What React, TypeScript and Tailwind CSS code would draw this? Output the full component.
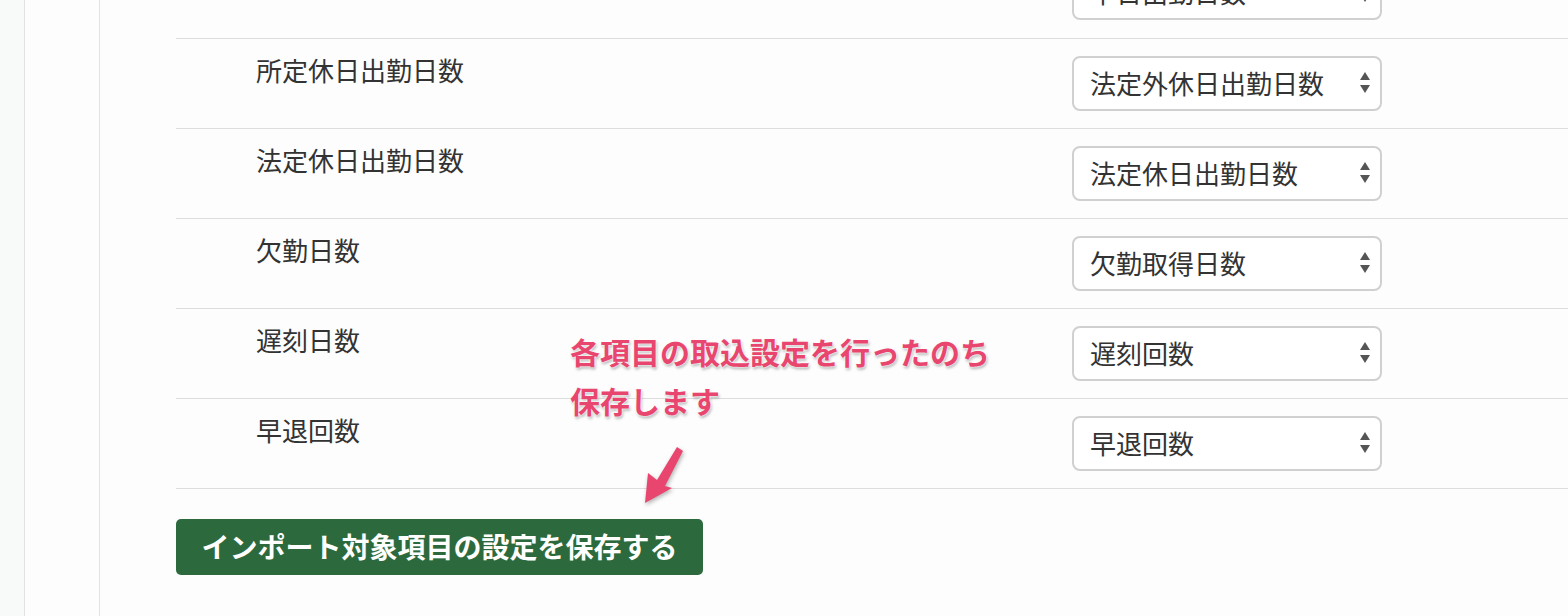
import React from 'react';

const rows = [
  { label: '平日出勤日数', value: '平日出勤日数' },
  { label: '所定休日出勤日数', value: '法定外休日出勤日数' },
  { label: '法定休日出勤日数', value: '法定休日出勤日数' },
  { label: '欠勤日数', value: '欠勤取得日数' },
  { label: '遅刻日数', value: '遅刻回数' },
  { label: '早退回数', value: '早退回数' },
];

const font = { fontFamily: '"Noto Sans CJK JP", "Noto Sans", sans-serif' };

function SelectArrows() {
  return (
    <svg width="12" height="22" viewBox="0 0 12 22" className="shrink-0">
      <path d="M6 0 L11 8 L1 8 Z" fill="#555" />
      <path d="M1 13 L11 13 L6 21 Z" fill="#555" />
    </svg>
  );
}

export default function App() {
  return (
    <div className="h-[616px] w-[1568px] overflow-hidden flex bg-[#fdfdfd] text-[#333]" style={font}>
      <div className="w-[25px] shrink-0 bg-[#f8f9f9] border-r border-[#e2e2e2]" />
      <div className="w-[75px] shrink-0 border-r border-[#e2e2e2]" />
      <div className="relative flex-1 pl-[76px]">
        <div className="-mt-[52px]">
          {rows.map((r, i) => (
            <div
              key={i}
              className={`grid grid-cols-[896px_310px] h-[90px] ${i > 0 ? 'border-t border-[#dddddd]' : ''}`}
            >
              <div className="pl-[80px] pt-[13px] text-[26px] leading-[36px]">{r.label}</div>
              <div className="mt-[17px] h-[55px] rounded-[8px] border-2 border-[#d0d0d0] bg-white flex items-center justify-between pl-[16px] pr-[9px] text-[26px] leading-[36px] pb-[2px]">
                <span>{r.value}</span>
                <SelectArrows />
              </div>
            </div>
          ))}
          <div className="border-t border-[#dddddd]" />
        </div>
        <button className="mt-[30px] h-[56px] w-[527px] rounded-[5px] bg-[#2c6a3e] text-white text-[28px] font-bold flex items-center justify-center pb-[2px]">
          インポート対象項目の設定を保存する
        </button>

        <div
          className="absolute left-[470px] top-[327px] text-[30px] leading-[49px] font-bold text-[#e8466f]"
          style={{ textShadow: '0 0 2px #fff, 0 0 3px #fff, 1px 2px 3px rgba(0,0,0,0.35)' }}
        >
          <div>各項目の取込設定を行ったのち</div>
          <div>保存します</div>
        </div>
        <svg
          className="absolute left-[540px] top-[444px]"
          width="50"
          height="64"
          viewBox="0 0 50 64"
          style={{ filter: 'drop-shadow(1px 2px 2px rgba(0,0,0,0.3))' }}
        >
          <path d="M37 3 L43 7 L25 42 L32 44 L5 59 L8 29 L17 36 Z" fill="#e8466f" />
        </svg>
      </div>
    </div>
  );
}
